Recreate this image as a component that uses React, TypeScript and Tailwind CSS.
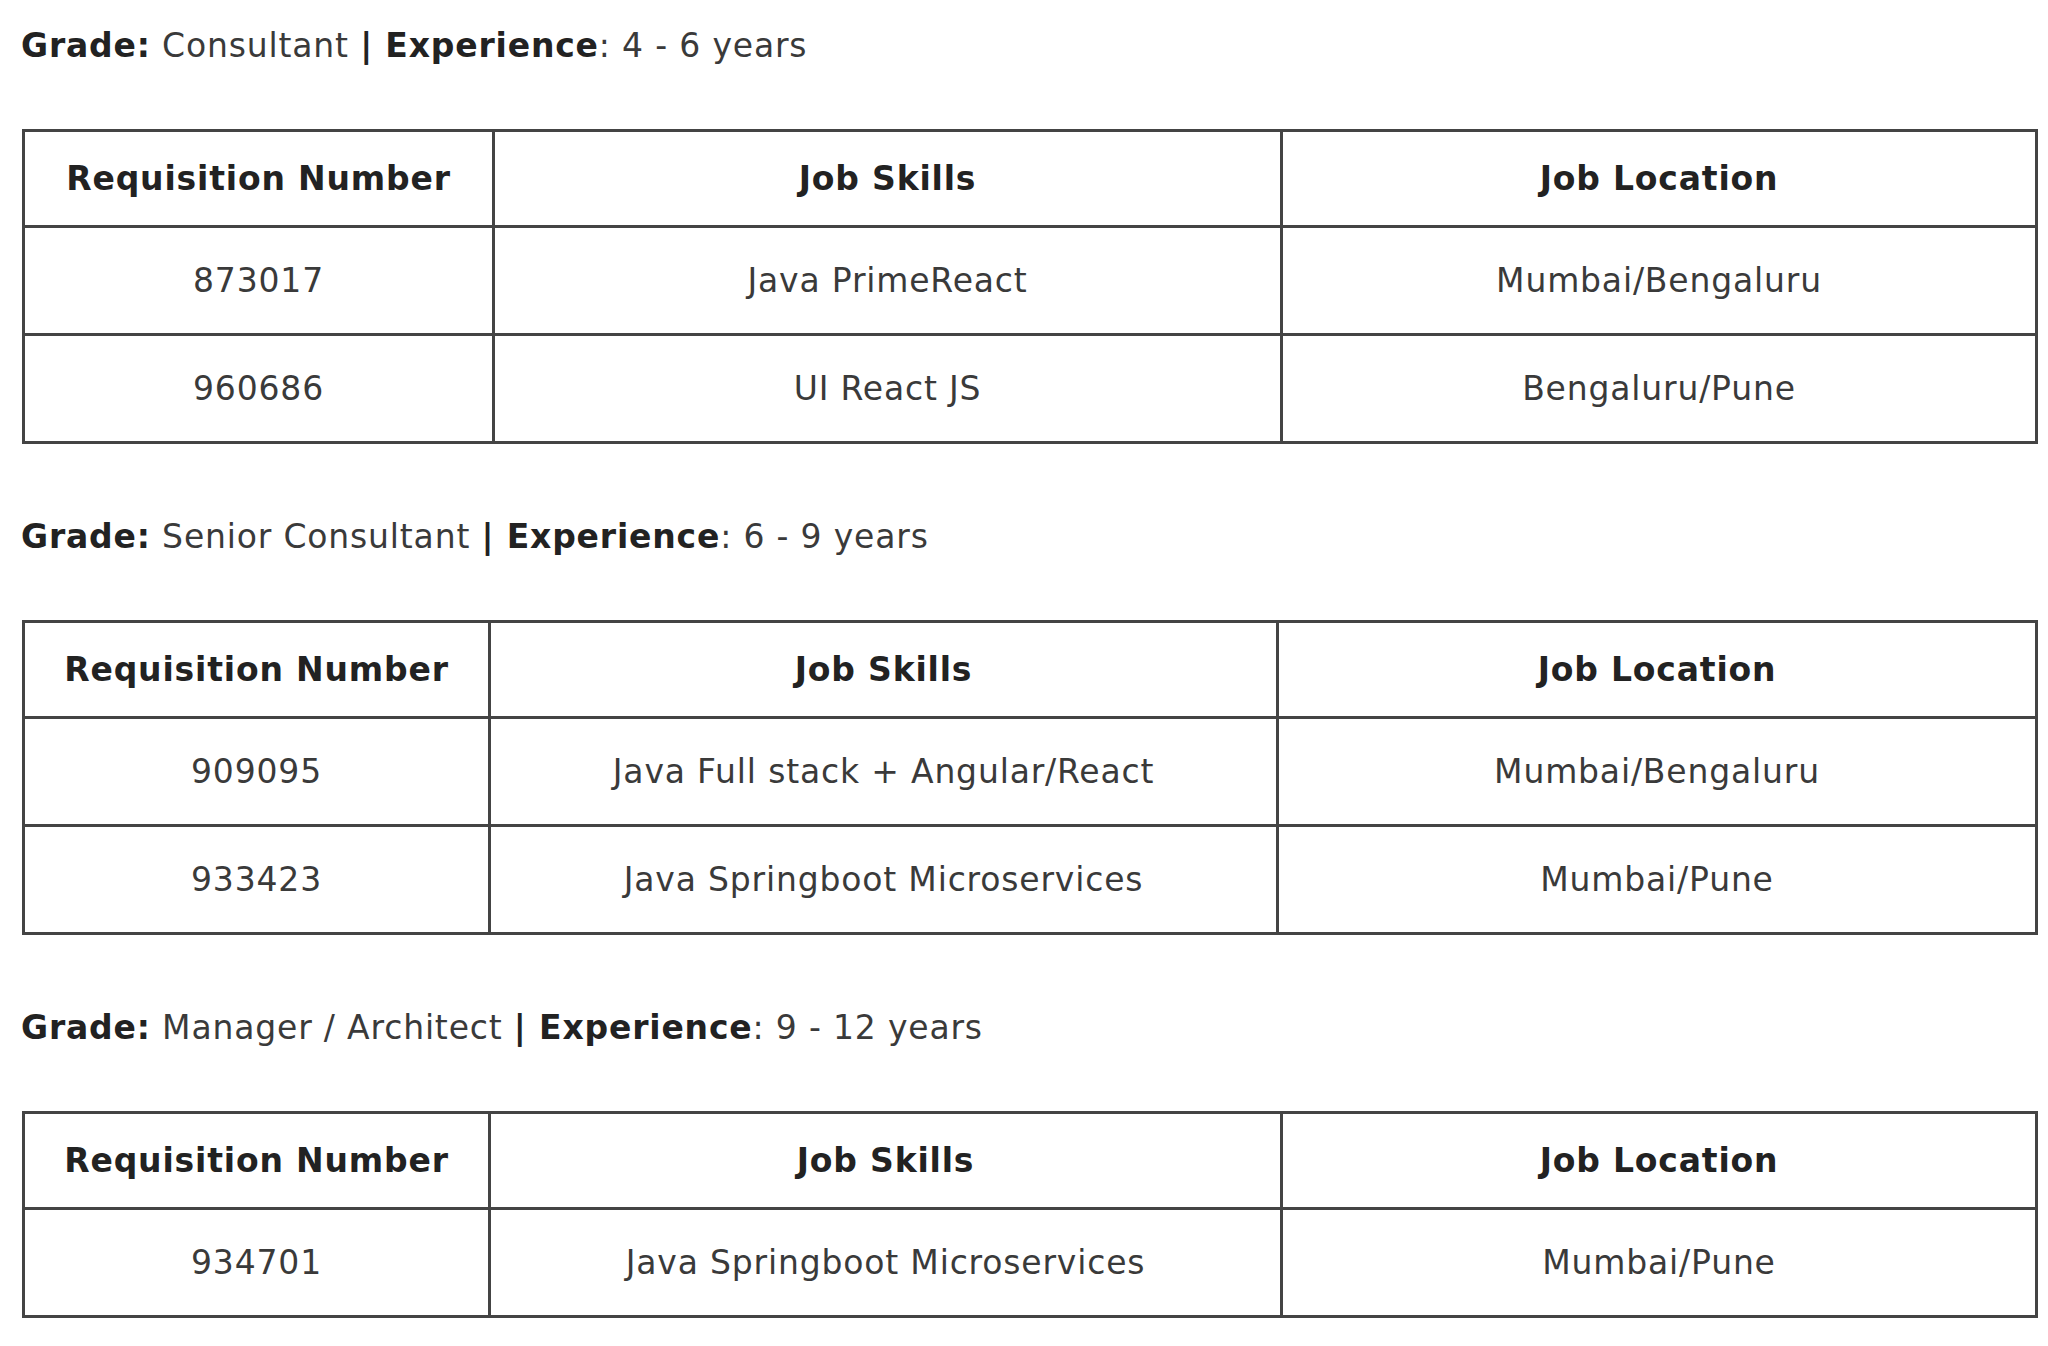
import React from "react";

interface Job {
  req: string;
  skills: string;
  location: string;
}

interface Group {
  grade: string;
  experience: string;
  cols: [string, string, string];
  jobs: Job[];
}

const groups: Group[] = [
  {
    grade: "Consultant",
    experience: "4 - 6 years",
    cols: ["w-[470px]", "w-[788px]", "w-[755px]"],
    jobs: [
      { req: "873017", skills: "Java PrimeReact", location: "Mumbai/Bengaluru" },
      { req: "960686", skills: "UI React JS", location: "Bengaluru/Pune" },
    ],
  },
  {
    grade: "Senior Consultant",
    experience: "6 - 9 years",
    cols: ["w-[466px]", "w-[788px]", "w-[759px]"],
    jobs: [
      { req: "909095", skills: "Java Full stack + Angular/React", location: "Mumbai/Bengaluru" },
      { req: "933423", skills: "Java Springboot Microservices", location: "Mumbai/Pune" },
    ],
  },
  {
    grade: "Manager / Architect",
    experience: "9 - 12 years",
    cols: ["w-[466px]", "w-[792px]", "w-[755px]"],
    jobs: [{ req: "934701", skills: "Java Springboot Microservices", location: "Mumbai/Pune" }],
  },
];

const cell = "border-[3px] border-[#444] text-center align-middle";

const GradeTable = ({ group }: { group: Group }) => (
  <div>
    <p className="text-[33px] leading-[40px] text-[#3a3a3a] tracking-[0.025em]">
      <b className="text-[#222]">Grade:</b> {group.grade} <b className="text-[#222]">| Experience</b>: {group.experience}
    </p>
    <table className="mt-[63px] w-[2013px] ml-px table-fixed border-collapse tracking-[0.025em]">
      <colgroup>
        {group.cols.map((c, i) => (
          <col key={i} className={c} />
        ))}
      </colgroup>
      <thead>
        <tr className="h-[96px]">
          <th className={`${cell} font-bold text-[#222]`}>Requisition Number</th>
          <th className={`${cell} font-bold text-[#222]`}>Job Skills</th>
          <th className={`${cell} font-bold text-[#222]`}>Job Location</th>
        </tr>
      </thead>
      <tbody>
        {group.jobs.map((job) => (
          <tr key={job.req} className="h-[108px] text-[#3a3a3a]">
            <td className={cell}>{job.req}</td>
            <td className={cell}>{job.skills}</td>
            <td className={cell}>{job.location}</td>
          </tr>
        ))}
      </tbody>
    </table>
  </div>
);

export default function App() {
  return (
    <div
      className="min-h-screen bg-white pl-[21px] pt-[26px] text-[33px]"
      style={{ fontFamily: '"DejaVu Sans", Verdana, sans-serif' }}
    >
      <div className="flex flex-col gap-[73px]">
        {groups.map((g) => (
          <GradeTable key={g.grade} group={g} />
        ))}
      </div>
    </div>
  );
}
